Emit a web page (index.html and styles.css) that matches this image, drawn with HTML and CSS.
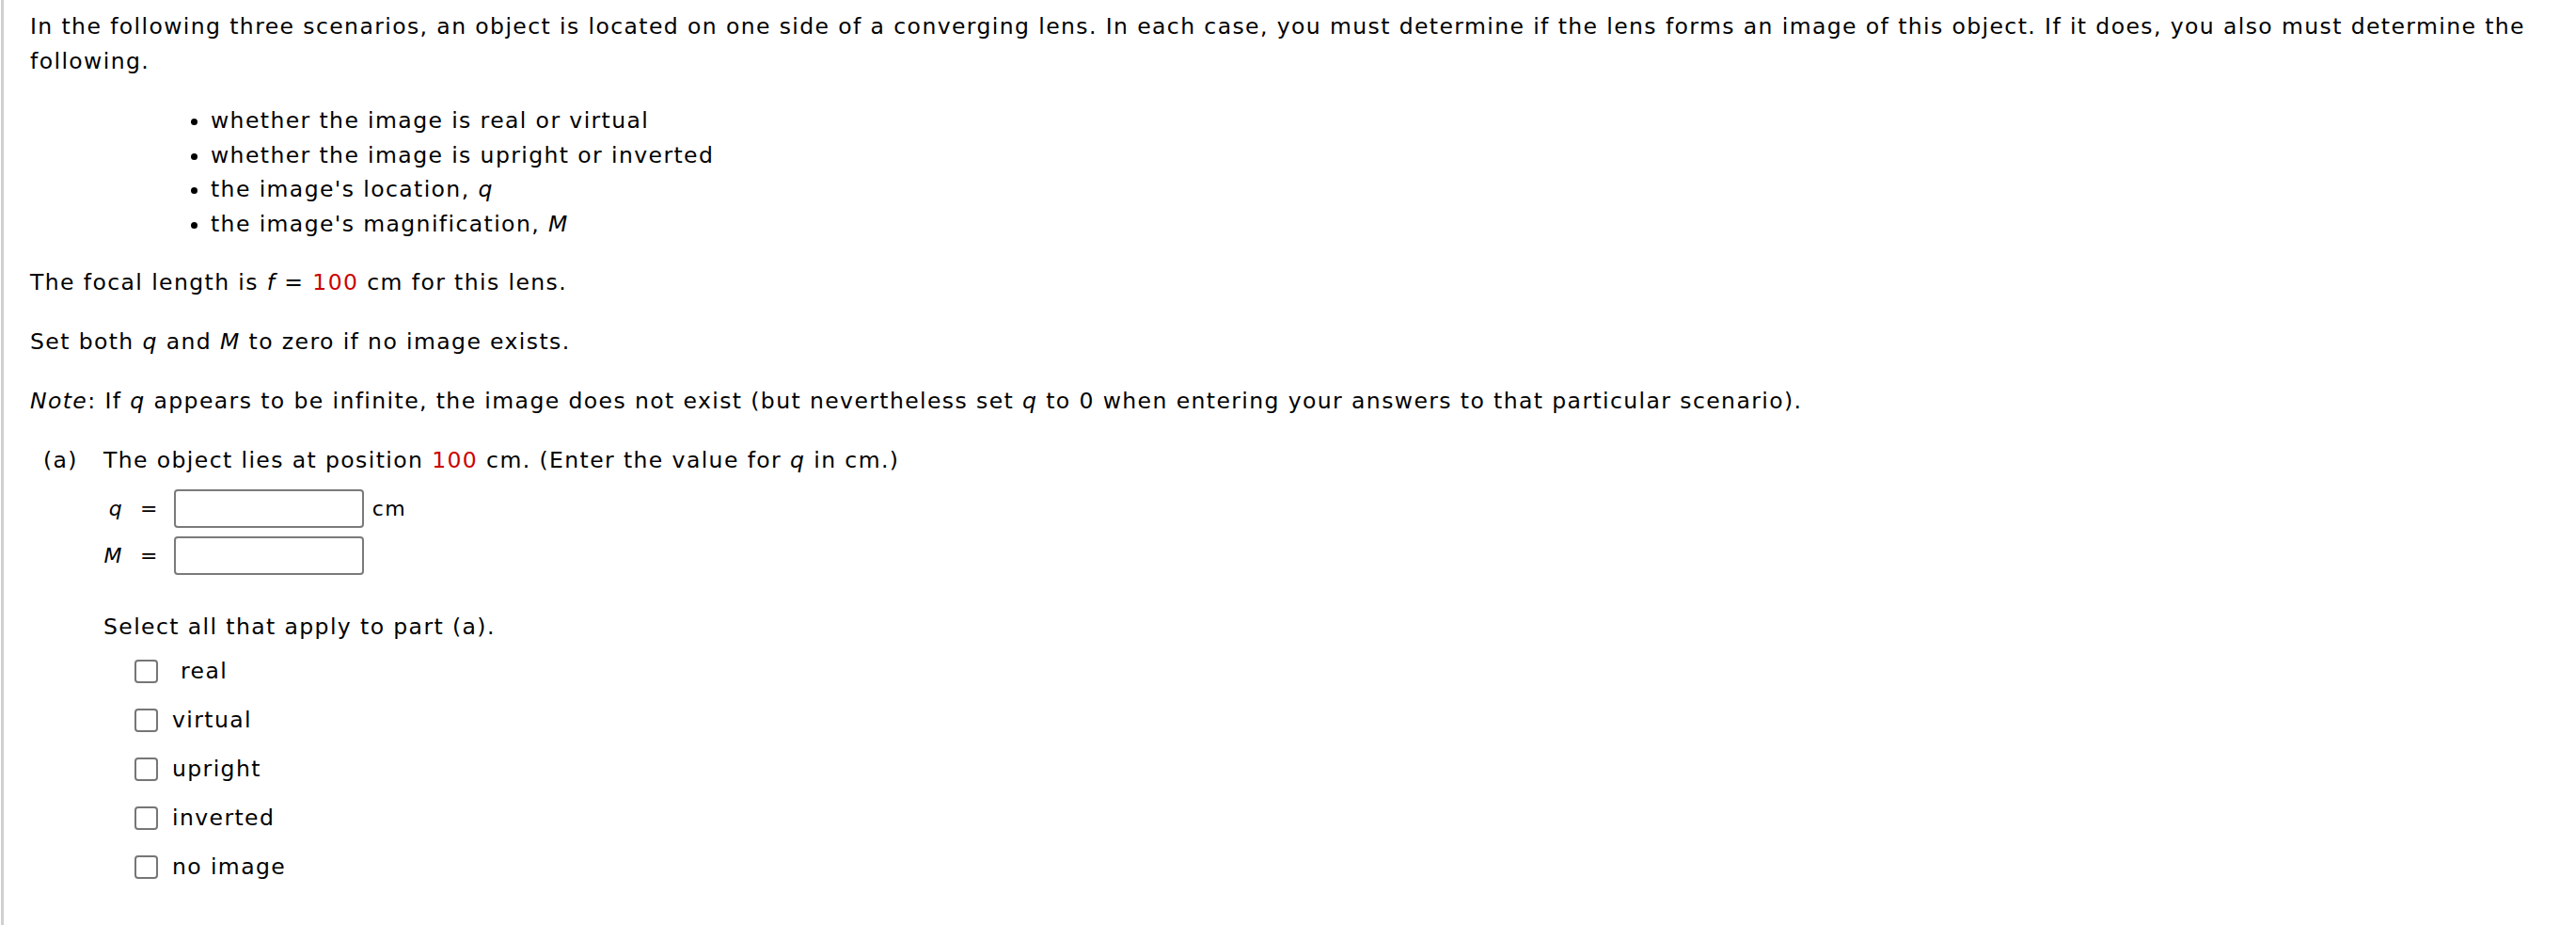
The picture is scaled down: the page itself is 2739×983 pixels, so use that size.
FILE: index.html
```html
<!DOCTYPE html>
<html>
<head>
<meta charset="utf-8">
<link rel="stylesheet" href="styles.css">
</head>
<body>
<div class="page">
  <p class="para">In the following three scenarios, an object is located on one side of a converging lens. In each case, you must determine if the lens forms an image of this object. If it does, you also must determine the following.</p>
  <ul class="bullets">
    <li>whether the image is real or virtual</li>
    <li>whether the image is upright or inverted</li>
    <li>the image's location, <i>q</i></li>
    <li>the image's magnification, <i>M</i></li>
  </ul>
  <p class="para">The focal length is <i>f</i> = <span class="red">100</span> cm for this lens.</p>
  <p class="para">Set both <i>q</i> and <i>M</i> to zero if no image exists.</p>
  <p class="para"><i>Note</i>: If <i>q</i> appears to be infinite, the image does not exist (but nevertheless set <i>q</i> to 0 when entering your answers to that particular scenario).</p>
  <div class="part">
    <div class="part-label">(a)</div>
    <div class="part-body">
      <p class="part-q">The object lies at position <span class="red">100</span> cm. (Enter the value for <i>q</i> in cm.)</p>
      <div class="answers">
        <div class="answer-row">
          <span class="var"><i>q</i></span><span class="eq">=</span><input class="box" type="text"><span class="unit">cm</span>
        </div>
        <div class="answer-row">
          <span class="var"><i>M</i></span><span class="eq">=</span><input class="box" type="text">
        </div>
      </div>
      <p class="select">Select all that apply to part (a).</p>
      <div class="choices">
        <label class="choice"><input type="checkbox" class="cb"><span class="choice-text choice-real">real</span></label>
        <label class="choice"><input type="checkbox" class="cb"><span class="choice-text">virtual</span></label>
        <label class="choice"><input type="checkbox" class="cb"><span class="choice-text">upright</span></label>
        <label class="choice"><input type="checkbox" class="cb"><span class="choice-text">inverted</span></label>
        <label class="choice"><input type="checkbox" class="cb"><span class="choice-text">no image</span></label>
      </div>
    </div>
  </div>
</div>
</body>
</html>
```

FILE: styles.css
```css
html, body {
  margin: 0;
  padding: 0;
  background: #fff;
}
body {
  font-family: "DejaVu Sans", Verdana, sans-serif;
  font-size: 23.5px;
  letter-spacing: 1.4px;
  color: #000;
}
.page {
  margin-left: 1px;
  border-left: 3px solid #d0d0d0;
  min-height: 983px;
  box-sizing: border-box;
  padding: 10px 20px 0 28px;
}
.para {
  margin: 0 0 26px 0;
  line-height: 37px;
}
.bullets {
  margin: 0 0 26px 0;
  padding-left: 192px;
  line-height: 36.5px;
  list-style: disc;
}
.red {
  color: #cc0000;
}
.part {
  display: flex;
  padding-left: 14px;
}
.part-label {
  width: 64px;
  line-height: 37px;
}
.part-body {
  display: flex;
  flex-direction: column;
}
.part-q {
  margin: 0;
  line-height: 37px;
}
.answers {
  display: flex;
  flex-direction: column;
  gap: 9px;
  margin-top: 12px;
}
.answer-row {
  display: flex;
  align-items: center;
  height: 41px;
}
.var {
  width: 21px;
  text-align: right;
  font-size: 22px;
}
.eq {
  margin: 0 16px 0 18px;
  font-size: 22px;
}
.box {
  width: 202px;
  height: 41px;
  box-sizing: border-box;
  border: 2px solid #7a7a7a;
  border-radius: 4px;
  margin: 0;
  padding: 0;
  font: inherit;
}
.unit {
  margin-left: 9px;
  font-size: 22px;
}
.select {
  margin: 37px 0 0 0;
  line-height: 37px;
}
.choices {
  display: flex;
  flex-direction: column;
  gap: 27px;
  margin-top: 16px;
  padding-left: 33px;
}
.choice {
  display: flex;
  align-items: center;
  height: 25px;
}
.cb {
  appearance: none;
  -webkit-appearance: none;
  width: 25px;
  height: 25px;
  box-sizing: border-box;
  border: 2px solid #767676;
  border-radius: 4px;
  margin: 0 15px 0 0;
  background: #fff;
}
.choice-text {
  line-height: 25px;
}
.choice-real {
  padding-left: 9px;
}
```
